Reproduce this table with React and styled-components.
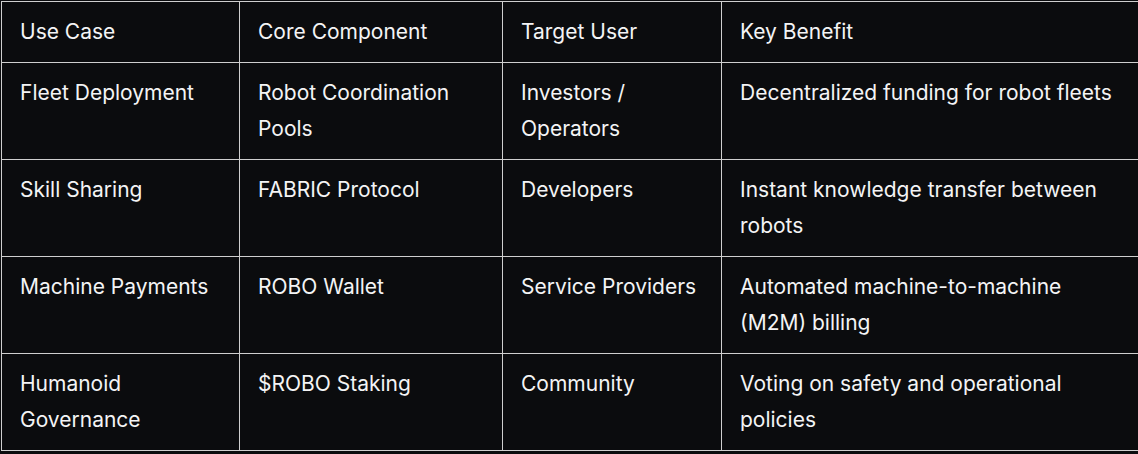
import React from "react";
import styled, { createGlobalStyle } from "styled-components";

const Global = createGlobalStyle`
  html, body {
    margin: 0;
    padding: 0;
    background: #0b0c0e;
    overflow: hidden;
  }
  body {
    font-family: Inter, "Noto Sans", sans-serif;
  }
`;

const Page = styled.div`
  padding: 1px 0 0 1px;
  background: #0b0c0e;
  min-height: 454px;
  box-sizing: border-box;
`;

const Table = styled.div`
  display: grid;
  grid-template-columns: 237px 262px 218px 1fr;
  gap: 1px;
  padding: 1px;
  width: 1139px;
  box-sizing: border-box;
  background: #cfcfcf;
`;

const Cell = styled.div`
  background: #0b0c0e;
  color: #f4f4f5;
  font-size: 21px;
  line-height: 36px;
  padding: 12px 18px;
`;

const header = ["Use Case", "Core Component", "Target User", "Key Benefit"];
const rows = [
  ["Fleet Deployment", "Robot Coordination Pools", "Investors / Operators", "Decentralized funding for robot fleets"],
  ["Skill Sharing", "FABRIC Protocol", "Developers", "Instant knowledge transfer between robots"],
  ["Machine Payments", "ROBO Wallet", "Service Providers", "Automated machine-to-machine (M2M) billing"],
  ["Humanoid Governance", "$ROBO Staking", "Community", "Voting on safety and operational policies"],
];

export default function App() {
  return (
    <>
      <Global />
      <Page>
        <Table role="table">
          {header.map((h) => (
            <Cell key={h} role="columnheader">
              {h}
            </Cell>
          ))}
          {rows.map((r, i) =>
            r.map((c, j) => (
              <Cell key={i + "-" + j} role="cell">
                {c}
              </Cell>
            ))
          )}
        </Table>
      </Page>
    </>
  );
}
